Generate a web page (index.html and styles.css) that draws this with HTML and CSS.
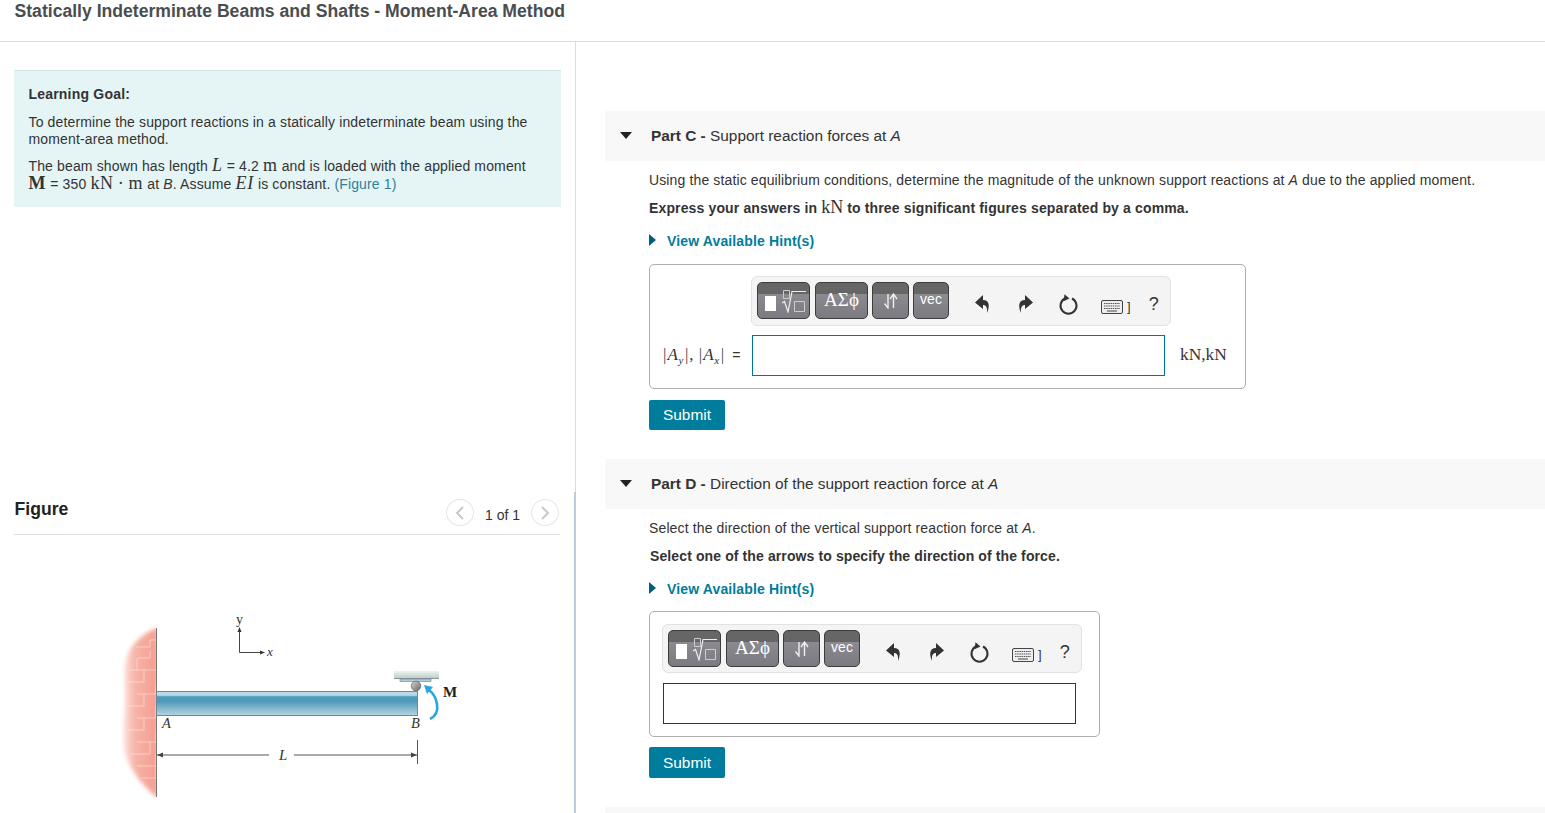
FILE: index.html
```html
<!DOCTYPE html>
<html lang="en">
<head>
<meta charset="utf-8">
<title>Statically Indeterminate Beams and Shafts</title>
<link rel="stylesheet" href="styles.css">
</head>
<body>
<header class="top"><h1>Statically Indeterminate Beams and Shafts - Moment-Area Method</h1></header>
<main class="layout">
  <aside class="left">
    <section class="intro">
      <div class="goal">
        <p class="goal-title">Learning Goal:</p>
        <p class="goal-p1">To determine the support reactions in a statically indeterminate beam using the moment-area method.</p>
        <p class="goal-p2">The beam shown has length <i class="m big">L</i> = 4.2 <span class="m big">m</span> and is loaded with the applied moment <b class="m big">M</b> = 350 <span class="m big">kN</span> <span class="m big">·</span> <span class="m big">m</span> at <i>B</i>. Assume <i class="m big">EI</i> is constant. <a class="link">(Figure 1)</a></p>
      </div>
    </section>
    <section class="figure">
      <div class="fig-head">
        <h2>Figure</h2>
        <div class="pager">
          <span class="round"><svg width="10" height="16" viewBox="0 0 10 16"><path d="M8 2 2 8l6 6" fill="none" stroke="#c3c9cf" stroke-width="2"/></svg></span>
          <span class="count">1 of 1</span>
          <span class="round"><svg width="10" height="16" viewBox="0 0 10 16"><path d="M2 2l6 6-6 6" fill="none" stroke="#c3c9cf" stroke-width="2"/></svg></span>
        </div>
      </div>
      <svg class="beam" width="380" height="213" viewBox="0 0 380 213">
        <defs>
          <linearGradient id="bg" x1="0" y1="0" x2="0" y2="1">
            <stop offset="0" stop-color="#b9dbe6"/><stop offset=".16" stop-color="#b4d8e4"/><stop offset=".22" stop-color="#4f9dbb"/><stop offset=".4" stop-color="#4d9ab8"/><stop offset="1" stop-color="#b5d4e2"/>
          </linearGradient>
          <linearGradient id="wall" x1="0" y1="0" x2="1" y2="0">
            <stop offset="0" stop-color="#fde3de"/><stop offset=".35" stop-color="#f7b3a7"/><stop offset="1" stop-color="#f59c8e"/>
          </linearGradient>
          <linearGradient id="ball" x1="0" y1="0" x2="1" y2="1">
            <stop offset="0" stop-color="#d5d5d0"/><stop offset="1" stop-color="#666"/>
          </linearGradient>
          <linearGradient id="sup" x1="0" y1="0" x2="0" y2="1">
            <stop offset="0" stop-color="#eef3f0"/><stop offset="1" stop-color="#bccfc9"/>
          </linearGradient>
          <filter id="soft" x="-30%" y="-10%" width="160%" height="120%"><feGaussianBlur stdDeviation="2"/></filter>
          <clipPath id="wallclip"><rect x="0" y="0" width="56" height="213"/></clipPath>
        </defs>
        <g clip-path="url(#wallclip)">
          <path d="M58 28C44 32 30 44 26 60c-3 14 0 28-1 44-1 14-3 30-1 44 3 18 16 36 34 50z" fill="url(#wall)" filter="url(#soft)"/>
          <path d="M36 47h14v-7h6M38 58h12v-7M30 70h26M37 58v12M28 82h16v-12M37 94h19v-12M28 106h16v-12M37 118h19v-12M28 130h16v-12M37 142h19v-12M30 154h20v-12M37 166h19v-12M42 178h14v-12" fill="none" stroke="#fde6e1" stroke-width="1" opacity=".6"/>
        </g>
        <path d="M56.500 28v169" stroke="#777" stroke-width="1"/>
        <rect x="56.500" y="91.500" width="261" height="24" fill="url(#bg)" stroke="#6f8a96"/>
        <path d="M139.500 30v22.500h24" fill="none" stroke="#444"/>
        <path d="m139.500 27 2 5h-4zM165 52.500l-5-2v4z" fill="#333"/>
        <rect x="294" y="71" width="45" height="7" fill="url(#sup)"/>
        <path d="M294 78.500h45" stroke="#8a9a98"/>
        <rect x="300" y="79" width="31" height="2.500" fill="#b5cbd9" stroke="#6d7f88" stroke-width=".6"/>
        <circle cx="316" cy="86" r="4.800" fill="url(#ball)" stroke="#555" stroke-width=".6"/>
        <path d="M330 119c6-3 8-9 7-15-1-6-4-11-8-14" fill="none" stroke="#2aa5e0" stroke-width="2.600"/>
        <path d="m324 85 9 2-6 7z" fill="#2aa5e0"/>
        <path d="M57 155h112M194 155h123M317.500 140v24" fill="none" stroke="#555"/>
        <path d="m57 155 6-2.500v5zM317 155l-6-2.500v5z" fill="#444"/>
        <text class="lab up" x="136" y="24">y</text>
        <text class="lab" x="167" y="56">x</text>
        <text class="lab bold" x="343" y="97">M</text>
        <text class="lab big-lab" x="62" y="128">A</text>
        <text class="lab big-lab" x="311" y="128">B</text>
        <text class="lab ell" x="179" y="160">L</text>
      </svg>
    </section>
  </aside>
  <div class="right">
    <section class="part part-c">
      <header class="part-head"><span class="caret"></span><h3><b>Part C -</b> Support reaction forces at <i>A</i></h3></header>
      <div class="part-body">
        <p class="q">Using the static equilibrium conditions, determine the magnitude of the unknown support reactions at <i>A</i> due to the applied moment.</p>
        <p class="ins">Express your answers in <span class="m unit">kN</span> to three significant figures separated by a comma.</p>
        <p class="hint"><span class="tri"></span>View Available Hint(s)</p>
        <div class="answer answer-c">
          <div class="tools tools-c">
            <span class="btn b1"><span class="sq"></span><svg class="rt" width="25" height="24" viewBox="0 0 25 24"><path d="M1.500 1.500h6v8h-6zM12.500 12.500h10v10h-10z" fill="none" stroke="#ccc"/><path d="M0 14l2.500-1.500L6 23 10 2.500h14" fill="none" stroke="#eee" stroke-width="1.200"/></svg></span>
            <span class="btn b2">ΑΣϕ</span>
            <span class="btn b3"><svg width="16" height="16" viewBox="0 0 16 16"><path d="M5 1v14L1.500 10.500M10.500 15V1M7 6l3.500-5L14 6" fill="none" stroke="#eee" stroke-width="1.400"/></svg></span>
            <span class="btn b4">vec</span>
            <span class="acts">
              <svg class="ic" width="18" height="20" viewBox="0 0 18 20"><path d="M9 1 1 8.500 9 15v-4c3 0 4.500 2 4 8 3-7 2.500-13-4-13z" fill="#333"/></svg>
              <svg class="ic" width="18" height="20" viewBox="0 0 18 20"><path d="M9 1l8 7.500L9 15v-4c-3 0-4.500 2-4 8-3-7-2.500-13 4-13z" fill="#333"/></svg>
              <svg class="ic" width="22" height="22" viewBox="0 0 22 22"><path d="M7 5.500a8 8 0 1 0 7 0" fill="none" stroke="#333" stroke-width="2"/><path d="M6 1.500 11.500 5 6 8.500z" fill="#333" transform="rotate(8 8 5)"/></svg>
              <span class="kb"><svg width="22" height="14" viewBox="0 0 22 14"><rect x=".5" y=".5" width="21" height="13" rx="1.500" fill="#eee" stroke="#444"/><path d="M3 3.500h16M3 6h16M3 8.500h16" stroke="#555" stroke-dasharray="1.500 .7"/><path d="M6 11h10" stroke="#444"/></svg><span class="brk">]</span></span>
              <span class="help">?</span>
            </span>
          </div>
          <div class="ansrow">
            <span class="label m"><span class="bar">|</span><i>A<sub>y</sub></i><span class="bar">|</span>, <span class="bar">|</span><i>A<sub>x</sub></i><span class="bar">|</span> <span class="eq">=</span></span>
            <span class="field"></span>
            <span class="units m">kN,kN</span>
          </div>
        </div>
        <button class="submit">Submit</button>
      </div>
    </section>
    <section class="part part-d">
      <header class="part-head"><span class="caret"></span><h3><b>Part D -</b> Direction of the support reaction force at <i>A</i></h3></header>
      <div class="part-body">
        <p class="q">Select the direction of the vertical support reaction force at <i>A</i>.</p>
        <p class="ins ins-d">Select one of the arrows to specify the direction of the force.</p>
        <p class="hint"><span class="tri"></span>View Available Hint(s)</p>
        <div class="answer answer-d">
          <div class="tools tools-d">
            <span class="btn b1"><span class="sq"></span><svg class="rt" width="25" height="24" viewBox="0 0 25 24"><path d="M1.500 1.500h6v8h-6zM12.500 12.500h10v10h-10z" fill="none" stroke="#ccc"/><path d="M0 14l2.500-1.500L6 23 10 2.500h14" fill="none" stroke="#eee" stroke-width="1.200"/></svg></span>
            <span class="btn b2">ΑΣϕ</span>
            <span class="btn b3"><svg width="16" height="16" viewBox="0 0 16 16"><path d="M5 1v14L1.500 10.500M10.500 15V1M7 6l3.500-5L14 6" fill="none" stroke="#eee" stroke-width="1.400"/></svg></span>
            <span class="btn b4">vec</span>
            <span class="acts">
              <svg class="ic" width="18" height="20" viewBox="0 0 18 20"><path d="M9 1 1 8.500 9 15v-4c3 0 4.500 2 4 8 3-7 2.500-13-4-13z" fill="#333"/></svg>
              <svg class="ic" width="18" height="20" viewBox="0 0 18 20"><path d="M9 1l8 7.500L9 15v-4c-3 0-4.500 2-4 8-3-7-2.500-13 4-13z" fill="#333"/></svg>
              <svg class="ic" width="22" height="22" viewBox="0 0 22 22"><path d="M7 5.500a8 8 0 1 0 7 0" fill="none" stroke="#333" stroke-width="2"/><path d="M6 1.500 11.500 5 6 8.500z" fill="#333" transform="rotate(8 8 5)"/></svg>
              <span class="kb"><svg width="22" height="14" viewBox="0 0 22 14"><rect x=".5" y=".5" width="21" height="13" rx="1.500" fill="#eee" stroke="#444"/><path d="M3 3.500h16M3 6h16M3 8.500h16" stroke="#555" stroke-dasharray="1.500 .7"/><path d="M6 11h10" stroke="#444"/></svg><span class="brk">]</span></span>
              <span class="help">?</span>
            </span>
          </div>
          <span class="field field-d"></span>
        </div>
        <button class="submit">Submit</button>
      </div>
    </section>
    <div class="part-next"></div>
  </div>
</main>
</body>
</html>
```
FILE: styles.css
```css
* { box-sizing: border-box; }
html, body { margin: 0; padding: 0; }
body {
  width: 1545px; height: 813px; overflow: hidden; background: #fff;
  font-family: "Liberation Sans", Arial, sans-serif; font-size: 14px; color: #333;
}
p, h1, h2, h3 { margin: 0; }
.m { font-family: "Liberation Serif", "Times New Roman", serif; }
.big { font-size: 18px; letter-spacing: .7px; }
.top { height: 42px; border-bottom: 1px solid #dcdee0; padding: 0 14.500px; }
.top h1 { font-size: 17.600px; line-height: 22px; font-weight: 700; color: #4a4d50; }
.layout { display: flex; height: 771px; }
.left { width: 576px; flex: none; display: flex; flex-direction: column; }
.intro { height: 450px; padding: 28px 14px 0; border-right: 1px solid #d9dcdf; }
.goal {
  width: 547px; height: 137px; background: #e5f5f6; border-top: 1px solid #d9e3e6;
  padding: 15px 18px 0 14.500px; line-height: 17px; letter-spacing: .14px;
}
.goal-title { font-weight: 700; letter-spacing: .2px; line-height: 16px; }
.goal-p1 { margin-top: 12px; }
.goal-p2 { margin-top: 9px; }
.goal-p2 .big { line-height: 16px; }
.link { color: #2f7f99; }
.figure { flex: 1; border-right: 2px solid #bccde0; padding: 0 0 0 14px; }
.fig-head {
  width: 546px; height: 43px; padding: 6px 1px 0 0.500px; border-bottom: 1px solid #dfe0e1;
  display: flex; justify-content: space-between; align-items: flex-start;
}
.fig-head h2 { font-size: 17.600px; line-height: 22px; color: #222; font-weight: 700; }
.pager { display: flex; align-items: center; margin-top: 1px; }
.round {
  width: 28px; height: 27px; border: 1px solid #e6e6e6; border-radius: 50%;
  display: flex; align-items: center; justify-content: center;
}
.count { width: 57px; text-align: center; font-size: 14px; color: #333; padding-top: 4px; }
.beam { display: block; margin: 65px 0 0 86px; }
.lab { font: italic 13px "Liberation Serif", serif; fill: #333; }
.lab.up { font-style: normal; font-size: 14px; }
.lab.bold { font: 700 15px "Liberation Serif", serif; fill: #222; }
.lab.big-lab { font-size: 14.500px; }
.lab.ell { font-size: 15px; }
.right { flex: 1; padding: 69px 0 0 29px; min-width: 0; }
.part { height: 348px; }
.part-head {
  height: 50px; background: #f8f8f8; display: flex; align-items: center;
}
.caret {
  width: 0; height: 0; margin-left: 15px; border-left: 6px solid transparent;
  border-right: 6px solid transparent; border-top: 7px solid #222; margin-top: -2px;
}
.part-head h3 { font-size: 15.400px; font-weight: 400; margin-left: 19px; color: #333; line-height: 20px; }
.part-body { padding: 11px 0 0 44px; }
.q { line-height: 16px; letter-spacing: .13px; }
.ins { margin-top: 11px; font-weight: 700; line-height: 16px; letter-spacing: .14px; color: #333; }
.ins-d { margin-left: 1px; margin-top: 12px; letter-spacing: .11px; }
.unit { font-weight: 400; font-size: 18px; line-height: 16px; letter-spacing: 0; }
.hint {
  margin-top: 17px; height: 16px; line-height: 16px; color: #007d9c; font-weight: 700;
  display: flex; align-items: center; letter-spacing: .14px;
}
.tri {
  width: 0; height: 0; margin-right: 11px; border-top: 6px solid transparent;
  border-bottom: 6px solid transparent; border-left: 7px solid #005f80; margin-top: -2px;
}
.answer { border: 1px solid #aeaeae; border-radius: 5px; margin-top: 15px; }
.answer-c { width: 597px; height: 125px; padding: 11px 0 0 101px; }
.answer-d { width: 451px; height: 126px; padding: 12px 0 0 12px; margin-top: 14px; }
.tools {
  width: 420px; height: 50px; background: #f4f4f4; border: 1px solid #e2e2e2; border-radius: 6px;
  display: flex; align-items: flex-start; padding: 5px 0 0 5px; gap: 5px;
}
.tools-d { width: 420px; height: 49px; }
.btn {
  height: 37px; border: 1px solid #3d3d3d; border-radius: 5px; color: #fff;
  background: linear-gradient(#666 0 31%, #8a8a90 32%, #7a7a80 100%);
  display: flex; align-items: center; justify-content: center; flex: none;
}
.b1 { width: 53px; justify-content: flex-start; padding-left: 7px; }
.b2 { width: 53px; font: 19px/1 "Liberation Serif", serif; padding-bottom: 3px; }
.b3 { width: 37px; margin-left: -1px; }
.b4 { width: 36px; margin-left: -1px; font-size: 14px; padding-bottom: 3px; }
.sq { width: 11px; height: 15px; background: #fff; margin-top: 6px; }
.rt { display: block; margin-left: 6px; margin-bottom: 0; }
.acts { display: flex; align-items: center; height: 35px; padding-top: 8px; margin-left: 13px; }
.acts .ic:nth-child(1) { margin-left: 7px; }
.acts .ic:nth-child(2) { margin-left: 24px; }
.acts .ic:nth-child(3) { margin-left: 24px; }
.kb { display: flex; align-items: center; margin-left: 21px; padding-top: 6px; }
.brk { font-size: 13px; margin-left: 4px; line-height: 14px; }
.help { font-size: 18px; color: #333; margin-left: 18px; line-height: 20px; padding-top: 1px; }
.ansrow { display: flex; align-items: center; margin-top: 9px; margin-left: -89px; }
.label { width: 90px; font-size: 17px; color: #333; white-space: nowrap; padding-bottom: 2px; }
.label sub { font-size: 11px; line-height: 0; }
.label i { letter-spacing: .6px; }
.bar { color: #444; margin: 0 1px; }
.eq { font-family: "Liberation Sans", sans-serif; font-size: 14px; margin-left: 3px; }
.field { display: block; width: 413px; height: 41px; border: 1px solid #00759a; background: #fff; flex: none; }
.field-d { margin-top: 10px; margin-left: 1px; border-color: #333; }
.units { margin-left: 15px; font-size: 17.400px; color: #333; padding-bottom: 2px; }
.submit {
  display: block; margin-top: 11px; width: 76px; height: 30px; border: 0; border-radius: 2px;
  background: #007d9c; color: #fff; font: 15.400px "Liberation Sans", sans-serif; padding: 0;
}
.part-d .submit { margin-top: 10px; height: 31px; }
.part-next { height: 30px; background: #f8f8f8; }
```
